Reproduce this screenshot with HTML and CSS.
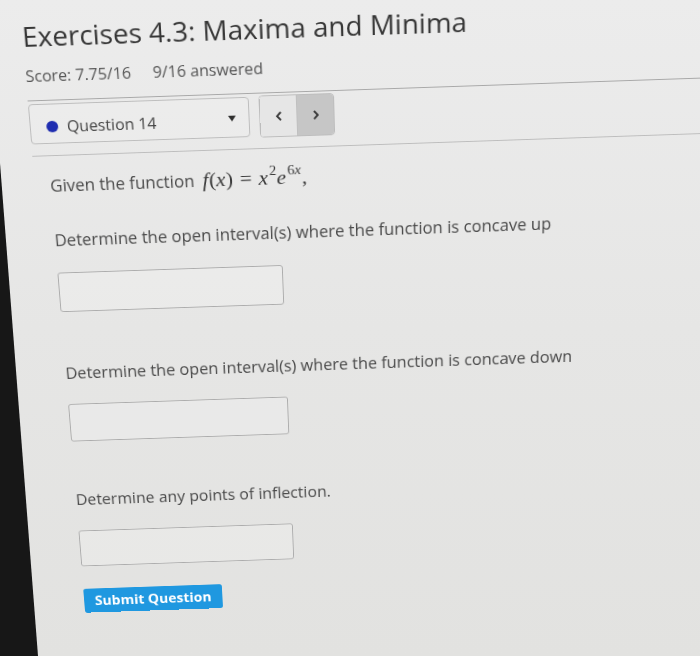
FILE: index.html
```html
<!DOCTYPE html>
<html lang="en">
<head>
<meta charset="utf-8">
<title>Exercises 4.3: Maxima and Minima</title>
<link rel="stylesheet" href="styles.css">
</head>
<body>
<div class="page">
  <header class="head">
    <h1 class="title">Exercises 4.3: Maxima and Minima</h1>
    <div class="score"><span>Score: 7.75/16</span><span>9/16 answered</span></div>
  </header>
  <div class="navrow">
    <div class="select">
      <span class="dot"></span>
      <span class="qlabel">Question 14</span>
      <svg class="caret" width="8" height="6" viewBox="0 0 8 6"><path d="M0 0H8L4 6Z" fill="#2e2e2e"/></svg>
    </div>
    <div class="pager">
      <span class="pbtn prev"><svg width="8" height="12" viewBox="0 0 8 12"><path d="M6 2L2.2 6.2 6 10.4" fill="none" stroke="#3a3a3a" stroke-width="2"/></svg></span>
      <span class="pbtn next"><svg width="8" height="12" viewBox="0 0 8 12"><path d="M2 2l3.8 4.2L2 10.4" fill="none" stroke="#3a3a3a" stroke-width="2"/></svg></span>
    </div>
  </div>
  <main class="question">
    <p class="text given">Given the function <span class="math"><i>f</i>(<i>x</i>)<span class="eq">=</span><i>x</i><sup>2</sup><i>e</i><sup>6<i>x</i></sup>,</span></p>
    <p class="text q1">Determine the open interval(s) where the function is concave up</p>
    <input class="answer a1" type="text">
    <p class="text q2">Determine the open interval(s) where the function is concave down</p>
    <input class="answer a2" type="text">
    <p class="text q3">Determine any points of inflection.</p>
    <input class="answer a3" type="text">
    <div class="actions"><button class="submit" type="button">Submit Question</button></div>
  </main>
</div>
<div class="bezel"></div>
</body>
</html>
```
FILE: styles.css
```css
html {
  height: 100%;
  overflow: hidden;
  background: linear-gradient(180deg, #ececec 0%, #e6e6e5 50%, #e2e2e0 100%);
}
body {
  margin: 0;
  height: 656px;
  overflow: hidden;
  font-family: "Open Sans", "Liberation Sans", sans-serif;
  color: #4a4a4a;
}
.page {
  width: 780px;
  transform-origin: 0 0;
  transform: matrix3d(1, -0.034, 0, 0, 0.088, 1, 0, 0.00018, 0, 0, 1, 0, 0, 0, 0, 1);
}
.head {
  margin-left: 19px;
  padding-top: 19px;
  padding-bottom: 14px;
  border-bottom: 1px solid #a8a8a8;
}
.title {
  margin: 0;
  font-size: 28px;
  line-height: 36px;
  font-weight: 400;
  color: #363636;
}
.score {
  margin-top: 12px;
  display: flex;
  gap: 22px;
  font-size: 16.2px;
  line-height: 22px;
  color: #555;
}
.navrow {
  margin-left: 19px;
  padding: 3px 0 11px;
  border-bottom: 1px solid #bdbdbd;
  display: flex;
  gap: 10px;
}
.select {
  box-sizing: border-box;
  width: 225px;
  height: 42px;
  border: 1px solid #bdbdbd;
  border-radius: 4px;
  display: flex;
  align-items: center;
  padding: 6px 13px 0 16px;
  background: rgba(255,255,255,0.12);
}
.dot {
  width: 12px;
  height: 12px;
  border-radius: 50%;
  background: #1f2db0;
  flex: none;
}
.qlabel {
  margin-left: 9px;
  font-size: 16.2px;
  color: #444;
  flex: 1;
}
.caret { flex: none; margin-top: -5px; }
.pager {
  display: flex;
  height: 44px;
  margin-top: -1px;
  border: 1px solid #bdbdbd;
  border-radius: 4px;
  overflow: hidden;
  box-sizing: border-box;
}
.pbtn {
  width: 37px;
  display: flex;
  align-items: center;
  justify-content: center;
}
.prev { background: #e6e6e6; }
.next { background: #c6c6c6; border-left: 1px solid #c0c0c0; }
.question {
  padding: 18px 0 0 35px;
}
.text {
  margin: 0;
  font-size: 17.4px;
  line-height: 26px;
  color: #4a4a4a;
}
.math {
  font-family: "Liberation Serif", "DejaVu Serif", serif;
  font-size: 22px;
  line-height: 0;
  color: #3a3a3a;
  margin-left: 4px;
}
.math i { letter-spacing: 0.5px; }
.math sup {
  font-size: 0.68em;
  vertical-align: 0.66em;
  line-height: 0;
  margin-left: 1px;
}
.eq { margin: 0 0.32em; font-style: normal; }
.q1 { margin-top: 33px; }
.q2 { margin-top: 56px; }
.q3 { margin-top: 56px; }
.answer {
  display: block;
  box-sizing: border-box;
  width: 237px;
  height: 44px;
  margin: 23px 0 0;
  padding: 0;
  border: 1px solid #acacac;
  border-radius: 3px;
  background: rgba(255,255,255,0.18);
}
.a3 { margin-top: 25px; }
.actions { margin-top: 28px; }
.submit {
  font-family: "Open Sans", "Liberation Sans", sans-serif;
  font-size: 15.6px;
  font-weight: 700;
  color: #fff;
  background: #1f98e0;
  border: none;
  border-radius: 3px;
  height: 30px;
  padding: 0 12px;
  line-height: 30px;
}
.bezel {
  position: fixed;
  left: 0;
  top: 0;
  width: 40px;
  height: 656px;
  background: #171717;
  clip-path: polygon(0 163px, 38px 656px, 0 656px);
}
```
